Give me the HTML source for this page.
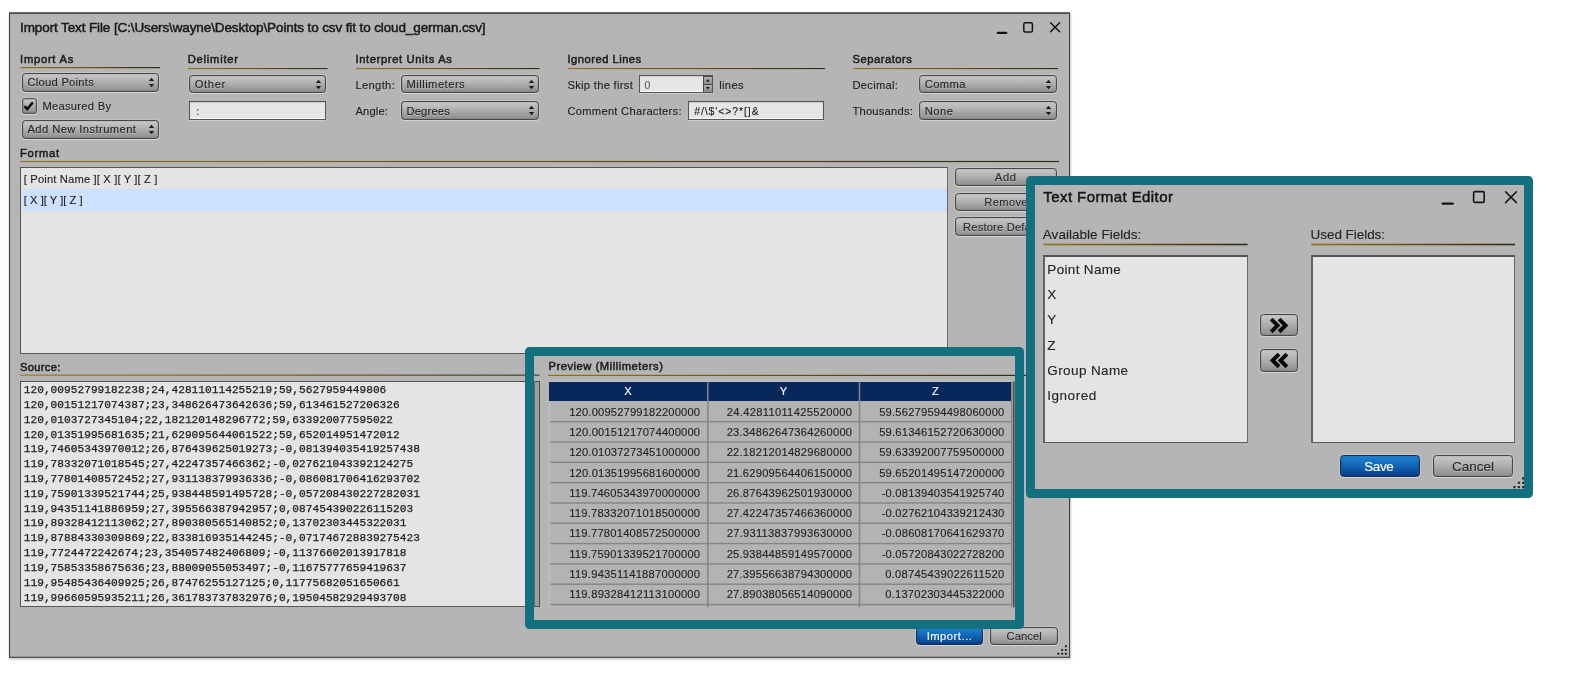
<!DOCTYPE html>
<html><head><meta charset="utf-8"><title>Import Text File</title>
<style>
html,body{margin:0;padding:0;background:#fff;}
body{width:1569px;height:677px;position:relative;overflow:hidden;font-family:"Liberation Sans",sans-serif;}
#w{left:0;top:0;width:1569px;height:677px;will-change:transform;}
div,span,svg{position:absolute;box-sizing:border-box;}
.t{white-space:pre;line-height:1;font-family:"Liberation Sans",sans-serif;-webkit-text-stroke:.12px currentColor;}
.t.m{font-family:"Liberation Mono",monospace;}
.sb{-webkit-text-stroke:.5px currentColor;}
.t.m{-webkit-text-stroke:.25px currentColor;}
.emb{text-shadow:0 1px 0 rgba(255,255,255,.3);}
.win{background:#b5b5b5;border:1px solid #4a4a3e;box-shadow:1px 1px 2px rgba(0,0,0,.18);}
.sel,.btn{border:1px solid #48483c;border-radius:3.5px;background:linear-gradient(#c8c8c8,#b0b0b0 45%,#8e8e8e);box-shadow:inset 0 0 1px rgba(60,60,48,.75),0 1px 0 rgba(255,255,255,.3),0 0 0 1px rgba(255,255,255,.2);}
.sel .ar{right:3.3px;top:50%;margin-top:-5.5px;}
.btn.blue{border-color:#16305c;background:linear-gradient(#1c84d4,#1264b2 50%,#0a3e8a);box-shadow:inset 0 0 1px rgba(10,30,70,.8),0 1px 0 rgba(255,255,255,.3),0 0 0 1px rgba(255,255,255,.2);}
.inp{background:#e6e6e6;border:1px solid #55554a;box-shadow:inset 0 -1px 0 #fafafa,inset 0 1px 1px rgba(0,0,0,.12),0 1px 0 rgba(255,255,255,.3);}
.list{background:#e4e4e4;border:1.5px solid #55554b;border-right:1px solid #6a6a60;border-bottom:1px solid #5a5a50;}
.teal{border:9px solid #13707f;border-radius:4.5px;}
</style></head><body><div id="w">

<svg style="left:0;top:0" width="1569" height="677" viewBox="0 0 1569 677"><defs><filter id="sh" x="-5%" y="-5%" width="110%" height="110%"><feGaussianBlur stdDeviation="0.8"/></filter></defs><rect x="9.3" y="13" width="1061.6" height="646.6" fill="#000" opacity=".22" filter="url(#sh)"/><rect x="9" y="12.25" width="1061.05" height="645.6" fill="#3f3f35"/><rect x="10.05" y="13.85" width="1058.95" height="642.9" fill="#b5b5b5"/></svg>
<span class="t  sb" style="left:20.12px;top:21px;font-size:13.5px;letter-spacing:-0.118px;color:#1a1a1a;">Import Text File [C:\Users\wayne\Desktop\Points to csv fit to cloud_german.csv]</span>
<svg style="left:990px;top:16px" width="78" height="24" viewBox="990 16 78 24"><g fill="none" stroke="#141414" stroke-linecap="round" stroke-linejoin="round"><path d="M997.7 32.8 H1006.3" stroke-width="2.2"/><rect x="1023.8" y="22.8" width="8.6" height="9.3" rx="1.4" stroke-width="1.5"/><path d="M1050.6 22.8 L1059.6 31.8 M1059.6 22.8 L1050.6 31.8" stroke-width="1.5"/></g></svg>
<span class="t  sb" style="left:20.04px;top:54px;font-size:11.2px;letter-spacing:0.746px;color:#1c1c1c;">Import As</span>
<span class="t  sb" style="left:187.74px;top:54px;font-size:11.2px;letter-spacing:0.773px;color:#1c1c1c;">Delimiter</span>
<span class="t  sb" style="left:355.44px;top:54px;font-size:11.2px;letter-spacing:0.623px;color:#1c1c1c;">Interpret Units As</span>
<span class="t  sb" style="left:567.44px;top:54px;font-size:11.2px;letter-spacing:0.496px;color:#1c1c1c;">Ignored Lines</span>
<span class="t  sb" style="left:852.44px;top:54px;font-size:11.2px;letter-spacing:0.524px;color:#1c1c1c;">Separators</span>
<div class="sel" style="left:22.00px;top:73.20px;width:137.00px;height:18.80px;"><svg class="ar" width="7" height="11" viewBox="0 0 7 11"><path d="M0.8 4 L3.5 0.8 L6.2 4 Z M0.8 7 L3.5 10.2 L6.2 7 Z" fill="#1c1c1c"/></svg></div>
<span class="t  emb" style="left:27.44px;top:77px;font-size:11.2px;letter-spacing:0.267px;color:#222;">Cloud Points</span>
<div class="btn" style="left:22.00px;top:98.00px;width:15.00px;height:16.00px;border-radius:2.5px;border-color:#55554a;box-shadow:inset 0 0 1.5px rgba(60,60,48,.9),0 1px 0 rgba(255,255,255,.3),0 0 0 1px rgba(255,255,255,.2);"><svg style="left:0.3px;top:2px" width="12" height="10" viewBox="0 0 12 10"><path d="M1.5 5.1 L4.2 8.1 L9.9 1.4" fill="none" stroke="#0c0c0c" stroke-width="2.4"/></svg></div>
<span class="t  emb" style="left:42.44px;top:101px;font-size:11.2px;letter-spacing:0.265px;color:#222;">Measured By</span>
<div class="sel" style="left:22.00px;top:120.00px;width:137.00px;height:19.00px;"><svg class="ar" width="7" height="11" viewBox="0 0 7 11"><path d="M0.8 4 L3.5 0.8 L6.2 4 Z M0.8 7 L3.5 10.2 L6.2 7 Z" fill="#1c1c1c"/></svg></div>
<span class="t  emb" style="left:27.44px;top:124px;font-size:11.2px;letter-spacing:0.420px;color:#222;">Add New Instrument</span>
<div class="sel" style="left:189.30px;top:75.20px;width:136.90px;height:17.90px;"><svg class="ar" width="7" height="11" viewBox="0 0 7 11"><path d="M0.8 4 L3.5 0.8 L6.2 4 Z M0.8 7 L3.5 10.2 L6.2 7 Z" fill="#1c1c1c"/></svg></div>
<span class="t  emb" style="left:194.74px;top:79px;font-size:11.2px;letter-spacing:0.650px;color:#222;">Other</span>
<div class="inp" style="left:189.00px;top:100.70px;width:137.30px;height:19.10px;"></div>
<span class="t  " style="left:196.28px;top:106px;font-size:10.5px;letter-spacing:0.120px;color:#222;">:</span>
<span class="t  " style="left:355.44px;top:80px;font-size:11.2px;letter-spacing:0.335px;color:#222;">Length:</span>
<div class="sel" style="left:401.00px;top:75.20px;width:138.00px;height:17.90px;"><svg class="ar" width="7" height="11" viewBox="0 0 7 11"><path d="M0.8 4 L3.5 0.8 L6.2 4 Z M0.8 7 L3.5 10.2 L6.2 7 Z" fill="#1c1c1c"/></svg></div>
<span class="t  emb" style="left:406.44px;top:79px;font-size:11.2px;letter-spacing:0.481px;color:#222;">Millimeters</span>
<span class="t  " style="left:355.44px;top:106px;font-size:11.2px;letter-spacing:0.141px;color:#222;">Angle:</span>
<div class="sel" style="left:401.00px;top:100.90px;width:138.00px;height:18.90px;"><svg class="ar" width="7" height="11" viewBox="0 0 7 11"><path d="M0.8 4 L3.5 0.8 L6.2 4 Z M0.8 7 L3.5 10.2 L6.2 7 Z" fill="#1c1c1c"/></svg></div>
<span class="t  emb" style="left:406.44px;top:106px;font-size:11.2px;letter-spacing:0.186px;color:#222;">Degrees</span>
<span class="t  " style="left:567.44px;top:80px;font-size:11.2px;letter-spacing:0.292px;color:#222;">Skip the first</span>
<div class="inp" style="left:639.00px;top:75.20px;width:74.20px;height:18.20px;"></div>
<div class="" style="left:702.80px;top:76.20px;width:9.60px;height:16.20px;background:#4a4a3e;"></div>
<div class="" style="left:704.20px;top:77.00px;width:7.40px;height:7.20px;background:linear-gradient(#b4b4b4,#8c8c8c);"><svg style="left:1.9px;top:2.4px" width="3.6" height="2.4" viewBox="0 0 3.6 2.4"><path d="M0 2.4 L1.8 0 L3.6 2.4Z" fill="#111"/></svg></div>
<div class="" style="left:704.20px;top:85.00px;width:7.40px;height:6.80px;background:linear-gradient(#b0b0b0,#8a8a8a);"><svg style="left:1.9px;top:2.3px" width="3.6" height="2.4" viewBox="0 0 3.6 2.4"><path d="M0 0 L1.8 2.4 L3.6 0Z" fill="#111"/></svg></div>
<span class="t  " style="left:644.48px;top:80px;font-size:10.5px;letter-spacing:0.120px;color:#5a5a5a;">0</span>
<span class="t  " style="left:719.24px;top:80px;font-size:11.2px;letter-spacing:0.332px;color:#222;">lines</span>
<span class="t  " style="left:567.44px;top:106px;font-size:11.2px;letter-spacing:0.258px;color:#222;">Comment Characters:</span>
<div class="inp" style="left:688.00px;top:100.70px;width:136.30px;height:18.90px;"></div>
<span class="t  " style="left:694.27px;top:106px;font-size:10.5px;letter-spacing:0.895px;color:#222;">#/\$&#x27;&lt;&gt;?*[]&amp;</span>
<span class="t  " style="left:852.44px;top:80px;font-size:11.2px;letter-spacing:0.266px;color:#222;">Decimal:</span>
<div class="sel" style="left:919.30px;top:75.20px;width:137.30px;height:17.90px;"><svg class="ar" width="7" height="11" viewBox="0 0 7 11"><path d="M0.8 4 L3.5 0.8 L6.2 4 Z M0.8 7 L3.5 10.2 L6.2 7 Z" fill="#1c1c1c"/></svg></div>
<span class="t  emb" style="left:924.74px;top:79px;font-size:11.2px;letter-spacing:0.408px;color:#222;">Comma</span>
<span class="t  " style="left:852.44px;top:106px;font-size:11.2px;letter-spacing:0.215px;color:#222;">Thousands:</span>
<div class="sel" style="left:919.30px;top:100.90px;width:137.30px;height:18.90px;"><svg class="ar" width="7" height="11" viewBox="0 0 7 11"><path d="M0.8 4 L3.5 0.8 L6.2 4 Z M0.8 7 L3.5 10.2 L6.2 7 Z" fill="#1c1c1c"/></svg></div>
<span class="t  emb" style="left:924.74px;top:106px;font-size:11.2px;letter-spacing:0.502px;color:#222;">None</span>
<span class="t  sb" style="left:20.04px;top:148px;font-size:11.2px;letter-spacing:0.740px;color:#1c1c1c;">Format</span>
<div class="list" style="left:20.30px;top:167.00px;width:927.70px;height:186.60px;"></div>
<div class="" style="left:22.00px;top:189.30px;width:925.00px;height:21.50px;background:#cce1fd;"></div>
<span class="t  " style="left:23.84px;top:174px;font-size:11.2px;letter-spacing:0.146px;color:#222;">[ Point Name ][ X ][ Y ][ Z ]</span>
<span class="t  " style="left:23.84px;top:195px;font-size:11.2px;letter-spacing:0.004px;color:#222;">[ X ][ Y ][ Z ]</span>
<div class="btn" style="left:954.50px;top:167.50px;width:102.90px;height:18.10px;"></div>
<span class="t  emb" style="left:994.81px;top:172px;font-size:11.2px;letter-spacing:0.641px;color:#2a2a2a;">Add</span>
<div class="btn" style="left:954.50px;top:192.50px;width:102.90px;height:18.30px;"></div>
<span class="t  emb" style="left:984.28px;top:197px;font-size:11.2px;letter-spacing:0.334px;color:#2a2a2a;">Remove</span>
<div class="btn" style="left:954.50px;top:217.30px;width:102.90px;height:18.90px;"></div>
<span class="t  emb" style="left:963.09px;top:222px;font-size:11.2px;letter-spacing:0.160px;color:#2a2a2a;">Restore Defaults</span>
<span class="t  sb" style="left:20.04px;top:362px;font-size:11.2px;letter-spacing:0.299px;color:#1c1c1c;">Source:</span>
<div class="list" style="left:20.30px;top:380.70px;width:519.30px;height:226.80px;border-right:1.5px solid #4f4f44;"></div>
<span class="t m " style="left:23.74px;top:385px;font-size:11.17px;letter-spacing:0.020px;color:#1c1c1c;">120,00952799182238;24,428110114255219;59,5627959449806</span>
<span class="t m " style="left:23.74px;top:400px;font-size:11.17px;letter-spacing:0.020px;color:#1c1c1c;">120,00151217074387;23,348626473642636;59,613461527206326</span>
<span class="t m " style="left:23.74px;top:415px;font-size:11.17px;letter-spacing:0.020px;color:#1c1c1c;">120,0103727345104;22,182120148296772;59,633920077595022</span>
<span class="t m " style="left:23.74px;top:430px;font-size:11.17px;letter-spacing:0.020px;color:#1c1c1c;">120,01351995681635;21,629095644061522;59,652014951472012</span>
<span class="t m " style="left:23.74px;top:444px;font-size:11.17px;letter-spacing:0.020px;color:#1c1c1c;">119,74605343970012;26,876439625019273;-0,081394035419257438</span>
<span class="t m " style="left:23.74px;top:459px;font-size:11.17px;letter-spacing:0.020px;color:#1c1c1c;">119,78332071018545;27,42247357466362;-0,027621043392124275</span>
<span class="t m " style="left:23.74px;top:474px;font-size:11.17px;letter-spacing:0.020px;color:#1c1c1c;">119,77801408572452;27,931138379936336;-0,086081706416293702</span>
<span class="t m " style="left:23.74px;top:489px;font-size:11.17px;letter-spacing:0.020px;color:#1c1c1c;">119,75901339521744;25,938448591495728;-0,057208430227282031</span>
<span class="t m " style="left:23.74px;top:504px;font-size:11.17px;letter-spacing:0.020px;color:#1c1c1c;">119,94351141886959;27,395566387942957;0,087454390226115203</span>
<span class="t m " style="left:23.74px;top:518px;font-size:11.17px;letter-spacing:0.020px;color:#1c1c1c;">119,89328412113062;27,890380565140852;0,13702303445322031</span>
<span class="t m " style="left:23.74px;top:533px;font-size:11.17px;letter-spacing:0.020px;color:#1c1c1c;">119,87884330309869;22,833816935144245;-0,071746728839275423</span>
<span class="t m " style="left:23.74px;top:548px;font-size:11.17px;letter-spacing:0.020px;color:#1c1c1c;">119,7724472242674;23,354057482406809;-0,11376602013917818</span>
<span class="t m " style="left:23.74px;top:563px;font-size:11.17px;letter-spacing:0.020px;color:#1c1c1c;">119,75853358675636;23,88009055053497;-0,11675777659419637</span>
<span class="t m " style="left:23.74px;top:578px;font-size:11.17px;letter-spacing:0.020px;color:#1c1c1c;">119,95485436409925;26,87476255127125;0,11775682051650661</span>
<span class="t m " style="left:23.74px;top:593px;font-size:11.17px;letter-spacing:0.020px;color:#1c1c1c;">119,99660595935211;26,361783737832976;0,19504582929493708</span>
<div class="btn blue" style="left:915.50px;top:627.20px;width:67.50px;height:17.80px;"></div>
<span class="t  " style="left:926.63px;top:631px;font-size:11.2px;letter-spacing:0.527px;color:#fff;">Import...</span>
<div class="btn" style="left:990.00px;top:627.20px;width:67.50px;height:17.80px;"></div>
<span class="t  emb" style="left:1006.51px;top:631px;font-size:11.2px;letter-spacing:0.069px;color:#2a2a2a;">Cancel</span>
<svg style="left:1057px;top:645px" width="11" height="11" viewBox="0 0 11 11"><g fill="#1e1e1e"><rect x="7.95" y="0.25" width="1.9" height="1.9" rx=".4"/><rect x="4.15" y="4.05" width="1.9" height="1.9" rx=".4"/><rect x="7.95" y="4.05" width="1.9" height="1.9" rx=".4"/><rect x="0.35" y="7.85" width="1.9" height="1.9" rx=".4"/><rect x="4.15" y="7.85" width="1.9" height="1.9" rx=".4"/><rect x="7.95" y="7.85" width="1.9" height="1.9" rx=".4"/></g></svg>
<svg style="left:0;top:0" width="1569" height="677" viewBox="0 0 1569 677"><defs><linearGradient id="g" x1="0" x2="1" y1="0" y2="0"><stop offset="0" stop-color="#94701a"/><stop offset=".45" stop-color="#6a5416"/><stop offset="1" stop-color="#2f2a12"/></linearGradient></defs><rect x="20.50" y="67.00" width="139.50" height="1.2" fill="url(#g)"/><rect x="188.00" y="68.00" width="139.50" height="1.1" fill="url(#g)"/><rect x="356.00" y="68.00" width="183.50" height="1.1" fill="url(#g)"/><rect x="568.00" y="68.00" width="257.00" height="1.1" fill="url(#g)"/><rect x="853.00" y="68.00" width="205.00" height="1.1" fill="url(#g)"/><rect x="20.30" y="160.90" width="1038.70" height="1.2" fill="url(#g)"/><rect x="20.30" y="374.60" width="519.20" height="1.05" fill="url(#g)"/></svg>
<div class="" style="left:534.00px;top:356.00px;width:482.00px;height:264.00px;background:#b5b5b5;"></div>
<div class="" style="left:534.00px;top:380.70px;width:5.60px;height:226.80px;background:#9e9e9e;border:1.5px solid #4f4f44;border-left:1px solid #6a6a60;"></div>
<span class="t  sb" style="left:548.44px;top:361px;font-size:11.2px;letter-spacing:0.531px;color:#1c1c1c;">Preview (Millimeters)</span>
<div class="" style="left:549.20px;top:381.50px;width:462.60px;height:225.80px;background:#b3b3b3;"></div>
<div class="" style="left:549.20px;top:381.50px;width:462.60px;height:19.80px;background:#08275a;"></div>
<span class="t  " style="left:624.27px;top:386px;font-size:11.2px;letter-spacing:0.120px;color:#fff;">X</span>
<span class="t  " style="left:779.77px;top:386px;font-size:11.2px;letter-spacing:0.120px;color:#fff;">Y</span>
<span class="t  " style="left:932.08px;top:386px;font-size:11.2px;letter-spacing:0.120px;color:#fff;">Z</span>
<span class="t  " style="left:569.23px;top:407px;font-size:11.2px;letter-spacing:0.163px;color:#222;">120.00952799182200000</span>
<span class="t  " style="left:726.70px;top:407px;font-size:11.2px;letter-spacing:0.299px;color:#222;">24.42811011425520000</span>
<span class="t  " style="left:879.15px;top:407px;font-size:11.2px;letter-spacing:0.202px;color:#222;">59.56279594498060000</span>
<span class="t  " style="left:569.23px;top:427px;font-size:11.2px;letter-spacing:0.163px;color:#222;">120.00151217074400000</span>
<span class="t  " style="left:726.66px;top:427px;font-size:11.2px;letter-spacing:0.214px;color:#222;">23.34862647364260000</span>
<span class="t  " style="left:879.15px;top:427px;font-size:11.2px;letter-spacing:0.202px;color:#222;">59.61346152720630000</span>
<span class="t  " style="left:569.23px;top:447px;font-size:11.2px;letter-spacing:0.163px;color:#222;">120.01037273451000000</span>
<span class="t  " style="left:726.66px;top:447px;font-size:11.2px;letter-spacing:0.214px;color:#222;">22.18212014829680000</span>
<span class="t  " style="left:879.15px;top:447px;font-size:11.2px;letter-spacing:0.202px;color:#222;">59.63392007759500000</span>
<span class="t  " style="left:569.23px;top:468px;font-size:11.2px;letter-spacing:0.163px;color:#222;">120.01351995681600000</span>
<span class="t  " style="left:726.66px;top:468px;font-size:11.2px;letter-spacing:0.214px;color:#222;">21.62909564406150000</span>
<span class="t  " style="left:879.15px;top:468px;font-size:11.2px;letter-spacing:0.202px;color:#222;">59.65201495147200000</span>
<span class="t  " style="left:569.25px;top:488px;font-size:11.2px;letter-spacing:0.204px;color:#222;">119.74605343970000000</span>
<span class="t  " style="left:726.66px;top:488px;font-size:11.2px;letter-spacing:0.214px;color:#222;">26.87643962501930000</span>
<span class="t  " style="left:881.65px;top:488px;font-size:11.2px;letter-spacing:0.201px;color:#222;">-0.08139403541925740</span>
<span class="t  " style="left:569.25px;top:508px;font-size:11.2px;letter-spacing:0.204px;color:#222;">119.78332071018500000</span>
<span class="t  " style="left:726.66px;top:508px;font-size:11.2px;letter-spacing:0.214px;color:#222;">27.42247357466360000</span>
<span class="t  " style="left:881.65px;top:508px;font-size:11.2px;letter-spacing:0.201px;color:#222;">-0.02762104339212430</span>
<span class="t  " style="left:569.25px;top:528px;font-size:11.2px;letter-spacing:0.204px;color:#222;">119.77801408572500000</span>
<span class="t  " style="left:726.68px;top:528px;font-size:11.2px;letter-spacing:0.257px;color:#222;">27.93113837993630000</span>
<span class="t  " style="left:881.65px;top:528px;font-size:11.2px;letter-spacing:0.201px;color:#222;">-0.08608170641629370</span>
<span class="t  " style="left:569.25px;top:549px;font-size:11.2px;letter-spacing:0.204px;color:#222;">119.75901339521700000</span>
<span class="t  " style="left:726.66px;top:549px;font-size:11.2px;letter-spacing:0.214px;color:#222;">25.93844859149570000</span>
<span class="t  " style="left:881.65px;top:549px;font-size:11.2px;letter-spacing:0.201px;color:#222;">-0.05720843022728200</span>
<span class="t  " style="left:569.27px;top:569px;font-size:11.2px;letter-spacing:0.245px;color:#222;">119.94351141887000000</span>
<span class="t  " style="left:726.66px;top:569px;font-size:11.2px;letter-spacing:0.214px;color:#222;">27.39556638794300000</span>
<span class="t  " style="left:885.19px;top:569px;font-size:11.2px;letter-spacing:0.269px;color:#222;">0.08745439022611520</span>
<span class="t  " style="left:569.27px;top:589px;font-size:11.2px;letter-spacing:0.245px;color:#222;">119.89328412113100000</span>
<span class="t  " style="left:726.66px;top:589px;font-size:11.2px;letter-spacing:0.214px;color:#222;">27.89038056514090000</span>
<span class="t  " style="left:885.16px;top:589px;font-size:11.2px;letter-spacing:0.224px;color:#222;">0.13702303445322000</span>
<svg style="left:0;top:0" width="1569" height="677" viewBox="0 0 1569 677"><defs><linearGradient id="g" x1="0" x2="1" y1="0" y2="0"><stop offset="0" stop-color="#94701a"/><stop offset=".45" stop-color="#6a5416"/><stop offset="1" stop-color="#2f2a12"/></linearGradient></defs><rect x="534.00" y="374.60" width="5.50" height="1.05" fill="#3a3314"/><rect x="548.30" y="374.80" width="477.70" height="1.2" fill="url(#g)"/><rect x="549.20" y="380.40" width="465.40" height="1.10" fill="#c4c4c4"/><rect x="549.20" y="421.01" width="462.60" height="1.40" fill="#858585"/><rect x="549.20" y="441.32" width="462.60" height="1.40" fill="#858585"/><rect x="549.20" y="461.63" width="462.60" height="1.40" fill="#858585"/><rect x="549.20" y="481.94" width="462.60" height="1.40" fill="#858585"/><rect x="549.20" y="502.25" width="462.60" height="1.40" fill="#858585"/><rect x="549.20" y="522.56" width="462.60" height="1.40" fill="#858585"/><rect x="549.20" y="542.87" width="462.60" height="1.40" fill="#858585"/><rect x="549.20" y="563.18" width="462.60" height="1.40" fill="#858585"/><rect x="549.20" y="583.49" width="462.60" height="1.40" fill="#858585"/><rect x="549.20" y="603.80" width="462.60" height="1.40" fill="#858585"/><rect x="707.05" y="381.50" width="1.50" height="225.80" fill="#858585"/><rect x="858.75" y="381.50" width="1.50" height="225.80" fill="#858585"/><rect x="549.20" y="401.00" width="1.00" height="206.30" fill="#c4c4c4"/><rect x="1011.00" y="381.50" width="1.50" height="225.80" fill="#858585"/><rect x="1013.00" y="381.50" width="1.60" height="225.80" fill="#4f4f44"/></svg>
<div class="teal" style="left:525.00px;top:347.00px;width:499.30px;height:281.80px;"></div>
<div class="" style="left:1035.00px;top:185.00px;width:489.00px;height:304.50px;background:#b5b5b5;"></div>
<span class="t  sb" style="left:1043.35px;top:189px;font-size:15px;letter-spacing:0.412px;color:#161616;">Text Format Editor</span>
<svg style="left:1436px;top:186px" width="86" height="24" viewBox="1436 186 86 24"><g fill="none" stroke="#141414" stroke-linecap="round" stroke-linejoin="round"><path d="M1442.8 203.6 H1452.8" stroke-width="2.4"/><rect x="1473.6" y="191.6" width="10.6" height="10.8" rx="1.4" stroke-width="1.6"/><path d="M1505.6 191.8 L1516.4 202.6 M1516.4 191.8 L1505.6 202.6" stroke-width="1.6"/></g></svg>
<span class="t  " style="left:1042.83px;top:228px;font-size:13.5px;letter-spacing:0.027px;color:#222;">Available Fields:</span>
<span class="t  " style="left:1310.62px;top:228px;font-size:13.5px;letter-spacing:-0.054px;color:#222;">Used Fields:</span>
<div class="list" style="left:1043.20px;top:255.20px;width:204.40px;height:188.20px;border-width:2px 1.5px 1.5px 2px;border-left-color:#63635a;"></div>
<div class="list" style="left:1311.00px;top:255.20px;width:204.20px;height:188.20px;border-width:2px 1.5px 1.5px 2px;border-left-color:#63635a;"></div>
<span class="t  " style="left:1047.33px;top:263px;font-size:13.5px;letter-spacing:0.333px;color:#222;">Point Name</span>
<span class="t  " style="left:1047.33px;top:288px;font-size:13.5px;letter-spacing:0.120px;color:#222;">X</span>
<span class="t  " style="left:1047.33px;top:313px;font-size:13.5px;letter-spacing:0.120px;color:#222;">Y</span>
<span class="t  " style="left:1047.33px;top:339px;font-size:13.5px;letter-spacing:0.120px;color:#222;">Z</span>
<span class="t  " style="left:1047.33px;top:364px;font-size:13.5px;letter-spacing:0.391px;color:#222;">Group Name</span>
<span class="t  " style="left:1047.33px;top:389px;font-size:13.5px;letter-spacing:0.510px;color:#222;">Ignored</span>
<div class="btn" style="left:1259.90px;top:313.70px;width:38.30px;height:22.40px;"><svg style="left:-1px;top:-1px" width="38.3" height="22.4" viewBox="0 0 38.3 22.4"><g fill="none" stroke="#080808" stroke-width="4" stroke-linejoin="miter" transform=""><path d="M11.2 5.1 L17.55 11.45 L11.2 17.8"/><path d="M19.1 5.1 L25.5 11.45 L19.1 17.8"/></g></svg></div>
<div class="btn" style="left:1259.90px;top:349.40px;width:38.30px;height:22.40px;"><svg style="left:-1px;top:-1px" width="38.3" height="22.4" viewBox="0 0 38.3 22.4"><g fill="none" stroke="#080808" stroke-width="4" stroke-linejoin="miter" transform="translate(38.1 0) scale(-1 1)"><path d="M11.2 5.1 L17.55 11.45 L11.2 17.8"/><path d="M19.1 5.1 L25.5 11.45 L19.1 17.8"/></g></svg></div>
<div class="btn blue" style="left:1339.50px;top:455.00px;width:80.30px;height:22.10px;"></div>
<span class="t  " style="left:1364.15px;top:460px;font-size:13.5px;letter-spacing:-0.362px;color:#fff;">Save</span>
<div class="btn" style="left:1432.80px;top:455.00px;width:80.20px;height:22.10px;"></div>
<span class="t  emb" style="left:1452.04px;top:460px;font-size:13.5px;letter-spacing:-0.021px;color:#2a2a2a;">Cancel</span>
<svg style="left:1513px;top:477.3px" width="12.65" height="12.65" viewBox="0 0 11 11"><g fill="#1e1e1e"><rect x="7.95" y="0.25" width="1.9" height="1.9" rx=".4"/><rect x="4.15" y="4.05" width="1.9" height="1.9" rx=".4"/><rect x="7.95" y="4.05" width="1.9" height="1.9" rx=".4"/><rect x="0.35" y="7.85" width="1.9" height="1.9" rx=".4"/><rect x="4.15" y="7.85" width="1.9" height="1.9" rx=".4"/><rect x="7.95" y="7.85" width="1.9" height="1.9" rx=".4"/></g></svg>
<svg style="left:0;top:0" width="1569" height="677" viewBox="0 0 1569 677"><defs><linearGradient id="g" x1="0" x2="1" y1="0" y2="0"><stop offset="0" stop-color="#94701a"/><stop offset=".45" stop-color="#6a5416"/><stop offset="1" stop-color="#2f2a12"/></linearGradient></defs><rect x="1043.30" y="243.70" width="204.20" height="1.6" fill="url(#g)"/><rect x="1311.00" y="243.70" width="204.00" height="1.6" fill="url(#g)"/></svg>
<div class="teal" style="left:1026.20px;top:176.20px;width:506.80px;height:321.40px;"></div>
</div></body></html>
